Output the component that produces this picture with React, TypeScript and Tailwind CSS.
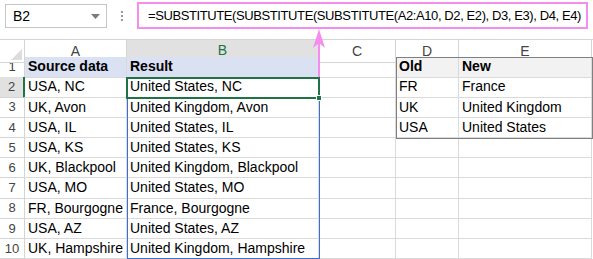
import React from "react";

const cols = ["A", "B", "C", "D", "E"];

const rows: string[][] = [
    ["Source data", "Result", "", "Old", "New"],
    ["USA, NC", "United States, NC", "", "FR", "France"],
    ["UK, Avon", "United Kingdom, Avon", "", "UK", "United Kingdom"],
    ["USA, IL", "United States, IL", "", "USA", "United States"],
    ["USA, KS", "United States, KS", "", "", ""],
    ["UK, Blackpool", "United Kingdom, Blackpool", "", "", ""],
    ["USA, MO", "United States, MO", "", "", ""],
    ["FR, Bourgogne", "France, Bourgogne", "", "", ""],
    ["USA, AZ", "United States, AZ", "", "", ""],
    ["UK, Hampshire", "United Kingdom, Hampshire", "", "", ""],
];

const gridCols = "grid grid-cols-[25px_102px_192px_77px_63px_133px]";

export default function App() {
    return (
        <div className="relative w-[593px] h-[259px] overflow-hidden bg-white font-['Liberation_Sans',sans-serif] text-[14px] text-black">
            {/* formula bar */}
            <div className="flex h-[39px] items-start">
                <div className="ml-[5px] mt-[4px] flex h-[24px] w-[102px] items-center justify-between border border-[#c6c6c6] pl-[7px] pr-[6px]">
                    <span className="text-[14px]">B2</span>
                    <svg width="9" height="5" viewBox="0 0 9 5">
                        <path d="M0 0 L9 0 L4.5 5 Z" fill="#7a7a7a" />
                    </svg>
                </div>
                <div className="ml-[14px] mt-[11px] flex flex-col gap-[2px]">
                    <div className="h-[2px] w-[2px] bg-[#9a9a9a]" />
                    <div className="h-[2px] w-[2px] bg-[#9a9a9a]" />
                    <div className="h-[2px] w-[2px] bg-[#9a9a9a]" />
                </div>
                <div className="ml-[14px] mt-[2px] flex h-[27px] w-[451px] items-center whitespace-nowrap border-2 border-[#f58cf0] pl-[9px] text-[13px] tracking-[-0.4px]">
                    =SUBSTITUTE(SUBSTITUTE(SUBSTITUTE(A2:A10, D2, E2), D3, E3), D4, E4)
                </div>
            </div>

            {/* column headers */}
            <div className={`${gridCols} h-[18px] border-t border-[#d4d4d4]`}>
                <div className="relative border-r border-b border-[#d4d4d4]">
                    <svg className="absolute right-[2px] bottom-[2px]" width="11" height="11" viewBox="0 0 11 11">
                        <path d="M11 0 L11 11 L0 11 Z" fill="#dcdcdc" />
                    </svg>
                </div>
                {cols.map((c) => (
                    <div
                        key={c}
                        className={
                            c === "B"
                                ? "flex items-center justify-center border-r border-b-2 border-r-[#c0c0c0] border-b-[#217346] bg-[#e1e1e1] text-[14px] text-[#217346]"
                                : "flex items-center justify-center border-r border-b border-[#d4d4d4] text-[14px] text-[#444]"
                        }
                    >
                        {c}
                    </div>
                ))}
            </div>

            {/* rows */}
            {rows.map((r, i) => {
                const head = i === 0;
                return (
                    <div key={i} className={`${gridCols} h-[20.2px]`}>
                        <div
                            className={
                                i === 1
                                    ? "flex items-center justify-center border-r-2 border-b border-r-[#217346] border-b-[#d4d4d4] bg-[#e1e1e1] text-[13px] text-[#444]"
                                    : "flex items-center justify-center border-r border-b border-[#d4d4d4] text-[13px] text-[#444]"
                            }
                        >
                            {i + 1}
                        </div>
                        {r.map((v, j) => (
                            <div
                                key={j}
                                className={[
                                    "flex items-center overflow-hidden whitespace-nowrap border-r border-b border-[#dadada] pl-[3px]",
                                    head && j < 2 ? "bg-[#d9e1f2] font-bold" : "",
                                    head && j > 2 ? "bg-[#f2f2f2] font-bold" : "",
                                ].join(" ")}
                            >
                                {v}
                            </div>
                        ))}
                    </div>
                );
            })}

            {/* overlays */}
            <div className="pointer-events-none absolute left-[396px] top-[57px] h-[82px] w-[197px] border border-[#808080]" />
            <div className="pointer-events-none absolute left-[127px] top-[78px] h-[181px] w-[193px] border border-[#3f6fd0]" />
            <div className="pointer-events-none absolute left-[126px] top-[77px] h-[22px] w-[194px] border-2 border-[#217346]" />
            <div className="pointer-events-none absolute left-[316px] top-[95px] h-[6px] w-[6px] border border-white bg-[#217346]" />
            <div className="pointer-events-none absolute left-[318px] top-[36px] h-[41px] w-[2px] bg-[#f58cf0]" />
            <svg className="pointer-events-none absolute left-[313px] top-[29px]" width="12" height="19" viewBox="0 0 12 19">
                <path d="M6 0 L12 19 L6 14 L0 19 Z" fill="#f58cf0" />
            </svg>
        </div>
    );
}
